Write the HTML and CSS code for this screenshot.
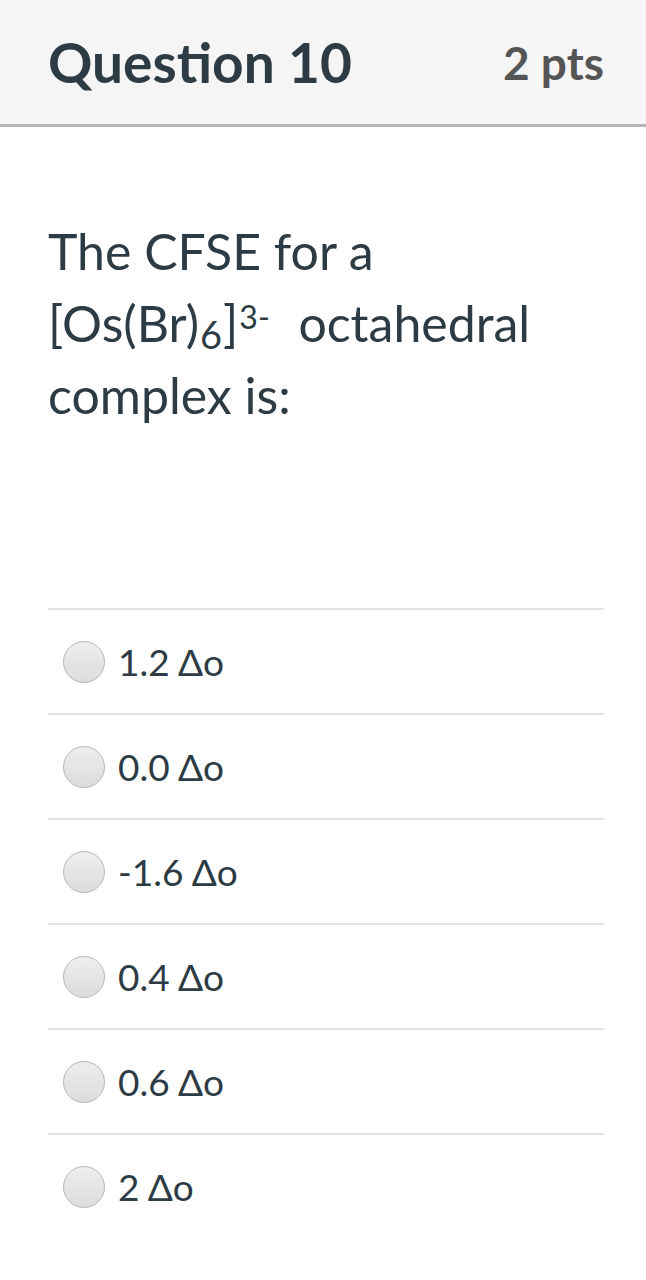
FILE: index.html
```html
<!DOCTYPE html>
<html>
<head>
<meta charset="utf-8">
<link rel="stylesheet" href="styles.css">
</head>
<body>
<div class="header">
  <div class="title">Question 10</div>
  <div class="pts">2 pts</div>
</div>
<div class="content">
  <div class="question">The CFSE for a<br>[Os(Br)<sub>6</sub>]<sup>3-</sup>&nbsp; octahedral<br>complex is:</div>
  <div class="answers">
    <div class="answer"><span class="radio"></span><span class="label">1.2 Δo</span></div>
    <div class="answer"><span class="radio"></span><span class="label">0.0 Δo</span></div>
    <div class="answer"><span class="radio"></span><span class="label">-1.6 Δo</span></div>
    <div class="answer"><span class="radio"></span><span class="label">0.4 Δo</span></div>
    <div class="answer"><span class="radio"></span><span class="label">0.6 Δo</span></div>
    <div class="answer"><span class="radio"></span><span class="label">2 Δo</span></div>
  </div>
</div>
</body>
</html>
```
FILE: styles.css
```css
html, body {
  margin: 0;
  padding: 0;
  background: #ffffff;
  font-family: Lato, "Open Sans", sans-serif;
  color: #2d3b45;
}
.header {
  height: 124px;
  background: #f5f5f5;
  border-bottom: 3px solid #b4b4b4;
  display: flex;
  align-items: center;
  justify-content: space-between;
  padding: 0 42px 0 48px;
}
.title {
  font-size: 55px;
  font-weight: 700;
  color: #2d3b45;
}
.pts {
  font-size: 46px;
  font-weight: 700;
  color: #555555;
}
.content {
  padding: 0 42px 0 48px;
}
.question {
  margin-top: 88px;
  font-size: 50px;
  line-height: 72px;
  color: #2d3b45;
}
.question sub {
  font-size: 38px;
  line-height: 0;
  vertical-align: -7px;
  margin: 0 1px;
}
.question sup {
  font-size: 32px;
  line-height: 0;
  vertical-align: 13px;
  margin: 0 3px 0 1px;
}
.answers {
  margin-top: 177px;
}
.answer {
  height: 103px;
  border-top: 2px solid #e2e2e2;
  display: flex;
  align-items: center;
}
.radio {
  width: 42px;
  height: 42px;
  border-radius: 50%;
  border: 1px solid #b8b8b8;
  background: linear-gradient(#eeeeee, #dcdcdc);
  margin-left: 15px;
  margin-right: 13px;
  box-sizing: border-box;
  flex: none;
}
.label {
  font-size: 37px;
  color: #2d3b45;
}
```
